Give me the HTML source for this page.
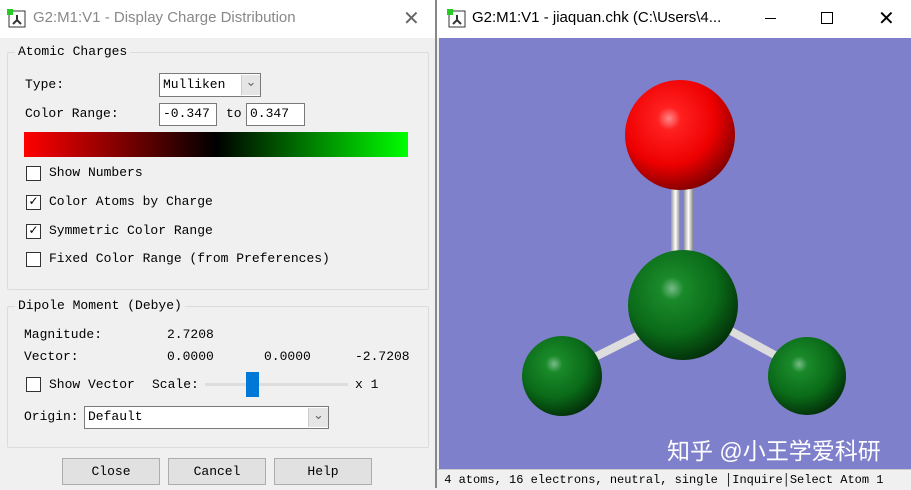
<html><head><style>
body{margin:0;width:911px;height:488px;overflow:hidden;background:#f0f0f0;position:relative;font-family:"Liberation Mono","SimSun",monospace;font-size:13px;color:#000}
.a{position:absolute}
.t{font-family:"Liberation Sans",sans-serif;font-size:15px;color:#888}
.cb{position:absolute;width:13px;height:13px;border:1px solid #333;background:#fff}
.fs{position:absolute;border:1px solid #dcdcdc;border-radius:2px}
.lg{position:absolute;background:#f0f0f0;padding:0 3px}
.in{position:absolute;background:#fff;border:1px solid #7a7a7a;height:20px;line-height:20px;padding-left:3px;box-sizing:border-box}
.btn{position:absolute;background:#e1e1e1;border:1px solid #adadad;height:25px;line-height:25px;text-align:center;width:96px}
</style></head><body>
<div class="a" style="left:0;top:0;width:436px;height:38px;background:#fff"></div>
<svg class="a" style="left:7px;top:9px" width="20" height="20"><rect x="2" y="2" width="16" height="16" fill="#fff" stroke="#333"/><rect x="0" y="0" width="6" height="6" fill="#2c2"/><path d="M10 6v5M6 15l4-4 4 4" stroke="#333" stroke-width="2" fill="none"/></svg>
<div class="a t" style="left:33px;top:9px">G2:M1:V1 - Display Charge Distribution</div>
<div class="a" style="left:403px;top:6px;font-size:20px;color:#666;font-family:'Liberation Sans'">✕</div>
<div class="a" style="left:435px;top:0;width:2px;height:488px;background:#888"></div>

<div class="fs" style="left:7px;top:52px;width:420px;height:236px"></div>
<div class="lg" style="left:15px;top:44px">Atomic Charges</div>
<div class="a" style="left:25px;top:77px">Type:</div>
<div class="in" style="left:159px;top:73px;width:102px;height:24px;line-height:22px">Mulliken</div>
<div class="a" style="left:241px;top:75px;width:18px;height:20px;background:#e5e5e5;border-left:1px solid #ccc;text-align:center;color:#666">⌄</div>
<div class="a" style="left:25px;top:106px">Color Range:</div>
<div class="in" style="left:159px;top:103px;width:58px;height:23px">-0.347</div>
<div class="a" style="left:226px;top:106px">to</div>
<div class="in" style="left:246px;top:103px;width:59px;height:23px">0.347</div>
<div class="a" style="left:24px;top:132px;width:384px;height:25px;background:linear-gradient(90deg,#f00,#000 50%,#0f0)"></div>
<div class="cb" style="left:26px;top:166px"></div><div class="a" style="left:49px;top:165px">Show Numbers</div>
<div class="cb" style="left:26px;top:195px;line-height:13px;font-size:12px;text-align:center">✓</div><div class="a" style="left:49px;top:194px">Color Atoms by Charge</div>
<div class="cb" style="left:26px;top:224px;line-height:13px;font-size:12px;text-align:center">✓</div><div class="a" style="left:49px;top:223px">Symmetric Color Range</div>
<div class="cb" style="left:26px;top:252px"></div><div class="a" style="left:49px;top:251px">Fixed Color Range (from Preferences)</div>

<div class="fs" style="left:7px;top:306px;width:420px;height:140px"></div>
<div class="lg" style="left:15px;top:298px">Dipole Moment (Debye)</div>
<div class="a" style="left:24px;top:327px">Magnitude:</div><div class="a" style="left:167px;top:327px">2.7208</div>
<div class="a" style="left:24px;top:349px">Vector:</div><div class="a" style="left:167px;top:349px">0.0000</div><div class="a" style="left:264px;top:349px">0.0000</div><div class="a" style="left:355px;top:349px">-2.7208</div>
<div class="cb" style="left:26px;top:377px"></div><div class="a" style="left:49px;top:377px">Show Vector</div><div class="a" style="left:152px;top:377px">Scale:</div>
<div class="a" style="left:205px;top:383px;width:143px;height:3px;background:#ddd"></div>
<div class="a" style="left:246px;top:372px;width:13px;height:25px;background:#0078d7"></div>
<div class="a" style="left:355px;top:377px">x 1</div>
<div class="a" style="left:24px;top:409px">Origin:</div>
<div class="in" style="left:84px;top:406px;width:245px;height:23px;line-height:20px">Default</div>
<div class="a" style="left:308px;top:408px;width:19px;height:19px;background:#e5e5e5;border-left:1px solid #ccc;text-align:center;color:#666">⌄</div>
<div class="btn" style="left:62px;top:458px">Close</div>
<div class="btn" style="left:168px;top:458px">Cancel</div>
<div class="btn" style="left:274px;top:458px">Help</div>

<div class="a" style="left:437px;top:0;width:474px;height:38px;background:#fff"></div>
<svg class="a" style="left:447px;top:9px" width="20" height="20"><rect x="2" y="2" width="16" height="16" fill="#fff" stroke="#333"/><rect x="0" y="0" width="6" height="6" fill="#2c2"/><path d="M10 6v5M6 15l4-4 4 4" stroke="#333" stroke-width="2" fill="none"/></svg>
<div class="a" style="left:472px;top:9px;font-family:'Liberation Sans',sans-serif;font-size:15px">G2:M1:V1 - jiaquan.chk (C:\Users\4...</div>
<div class="a" style="left:765px;top:18px;width:11px;height:1px;background:#000"></div>
<div class="a" style="left:821px;top:12px;width:10px;height:10px;border:1px solid #000"></div>
<div class="a" style="left:878px;top:6px;font-size:20px;font-family:'Liberation Sans'">✕</div>
<svg class="a" style="left:439px;top:38px" width="472" height="431">
<defs>
<radialGradient id="r" cx=".4" cy=".35" r=".7"><stop offset="0" stop-color="#f88"/><stop offset=".15" stop-color="#ff2020"/><stop offset=".6" stop-color="#e00"/><stop offset="1" stop-color="#700"/></radialGradient>
<radialGradient id="g" cx=".4" cy=".35" r=".7"><stop offset="0" stop-color="#7b8"/><stop offset=".15" stop-color="#1a8a2a"/><stop offset=".6" stop-color="#0a6a18"/><stop offset="1" stop-color="#022a08"/></radialGradient>
<linearGradient id="w"><stop offset="0" stop-color="#999"/><stop offset=".5" stop-color="#fff"/><stop offset="1" stop-color="#888"/></linearGradient>
</defs>
<rect width="472" height="431" fill="#7f80cc"/>
<rect x="232" y="140" width="9" height="80" fill="url(#w)"/>
<rect x="245" y="140" width="9" height="80" fill="url(#w)"/>
<path d="M150 322L210 292" stroke="#ddd" stroke-width="8"/>
<path d="M290 292L345 322" stroke="#ddd" stroke-width="8"/>
<circle cx="241" cy="97" r="55" fill="url(#r)"/>
<circle cx="244" cy="267" r="55" fill="url(#g)"/>
<circle cx="123" cy="338" r="40" fill="url(#g)"/>
<circle cx="368" cy="338" r="39" fill="url(#g)"/>
<text x="228" y="421" font-family="Liberation Sans,Noto Sans CJK SC,sans-serif" font-size="23" fill="#fff">知乎 @小王学爱科研</text>
</svg>
<div class="a" style="left:437px;top:469px;width:474px;height:19px;background:#f0f0f0;border-top:1px solid #ccc;line-height:20px;white-space:nowrap;font-size:12px">&nbsp;4 atoms, 16 electrons, neutral, single │Inquire│Select Atom 1</div>
</body></html>
